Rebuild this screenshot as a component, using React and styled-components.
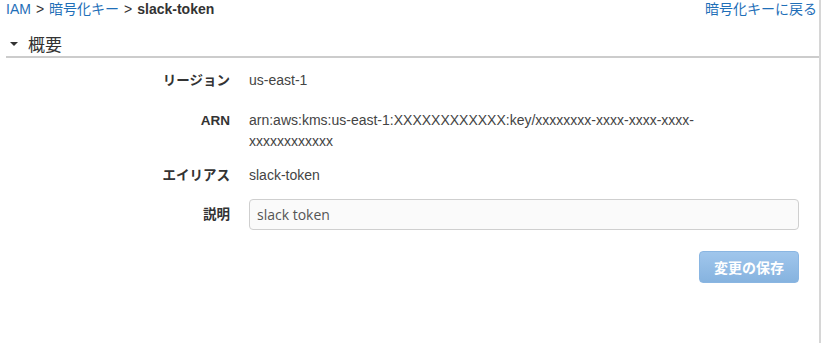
import React from "react";
import styled, { createGlobalStyle } from "styled-components";

const Global = createGlobalStyle`
  html, body { margin: 0; padding: 0; background: #fff; }
  body { font-family: "Liberation Sans", Arial, "Noto Sans CJK JP", sans-serif; }
`;

const Page = styled.div`
  width: 821px;
  height: 343px;
  box-sizing: border-box;
  border-right: 2px solid #d6d6d6;
  padding: 0 0 0 6px;
  overflow: hidden;
`;

const TopBar = styled.div`
  display: flex;
  justify-content: space-between;
  align-items: center;
  height: 19px;
  padding-right: 2px;
  font-size: 14px;
  line-height: 19px;
`;

const Crumbs = styled.div`
  display: flex;
  gap: 5px;
  color: #333;
`;

const Link = styled.a`
  color: #1f6fb8;
  text-decoration: none;
`;

const Current = styled.span`
  font-weight: bold;
  color: #333;
`;

const SectionHeader = styled.div`
  display: flex;
  align-items: center;
  gap: 10px;
  margin-top: 13px;
  height: 22px;
  padding-left: 4px;
  padding-bottom: 2px;
  border-bottom: 2px solid #cccccc;
  font-size: 17px;
  color: #333;
`;

const Caret = styled.span`
  width: 0;
  height: 0;
  border-left: 4px solid transparent;
  border-right: 4px solid transparent;
  border-top: 4px solid #333;
  margin-top: 1px;
`;

const Form = styled.div`
  display: grid;
  grid-template-columns: 224px 550px;
  column-gap: 19px;
  margin-top: 12px;
  line-height: 21px;
`;

const Label = styled.div`
  text-align: right;
  font-weight: bold;
  font-size: 13.5px;
  color: #333;
  padding-top: ${(p) => p.$pt || 0}px;
  padding-bottom: ${(p) => p.$pb || 0}px;
`;

const Value = styled.div`
  color: #444;
  font-size: 14px;
  padding-top: ${(p) => p.$pt || 0}px;
  padding-bottom: ${(p) => p.$pb || 0}px;
  padding-right: ${(p) => (p.$wide ? 0 : 88)}px;
`;

const Input = styled.input`
  box-sizing: border-box;
  width: 550px;
  height: 31px;
  border: 1px solid #cfcfcf;
  border-radius: 4px;
  background: #fafafa;
  padding: 0 7px;
  font-family: "Open Sans", "Noto Sans CJK JP", sans-serif;
  font-size: 14px;
  color: #555;
  outline: none;
`;

const Actions = styled.div`
  display: flex;
  justify-content: flex-end;
  width: 793px;
  margin-top: 21px;
`;

const Button = styled.button`
  width: 100px;
  height: 32px;
  border: 1px solid #8ab6e2;
  border-radius: 4px;
  background: linear-gradient(#a0c6ec, #86b3df);
  color: #fff;
  font-family: "Noto Sans CJK JP", sans-serif;
  font-weight: bold;
  font-size: 14px;
  padding: 0;
`;

export default function App() {
  return (
    <>
      <Global />
      <Page>
        <TopBar>
          <Crumbs>
            <Link>IAM</Link>
            <span>&gt;</span>
            <Link>暗号化キー</Link>
            <span>&gt;</span>
            <Current>slack-token</Current>
          </Crumbs>
          <Link>暗号化キーに戻る</Link>
        </TopBar>
        <SectionHeader>
          <Caret />
          <span>概要</span>
        </SectionHeader>
        <Form>
          <Label $pb={19}>リージョン</Label>
          <Value $pb={19}>us-east-1</Value>
          <Label $pb={13}>ARN</Label>
          <Value $pb={13}>arn:aws:kms:us-east-1:XXXXXXXXXXXX:key/xxxxxxxx-xxxx-xxxx-xxxx-xxxxxxxxxxxx</Value>
          <Label $pb={13}>エイリアス</Label>
          <Value $pb={13}>slack-token</Value>
          <Label $pt={5}>説明</Label>
          <Value $wide>
            <Input defaultValue="slack token" />
          </Value>
        </Form>
        <Actions>
          <Button>変更の保存</Button>
        </Actions>
      </Page>
    </>
  );
}
